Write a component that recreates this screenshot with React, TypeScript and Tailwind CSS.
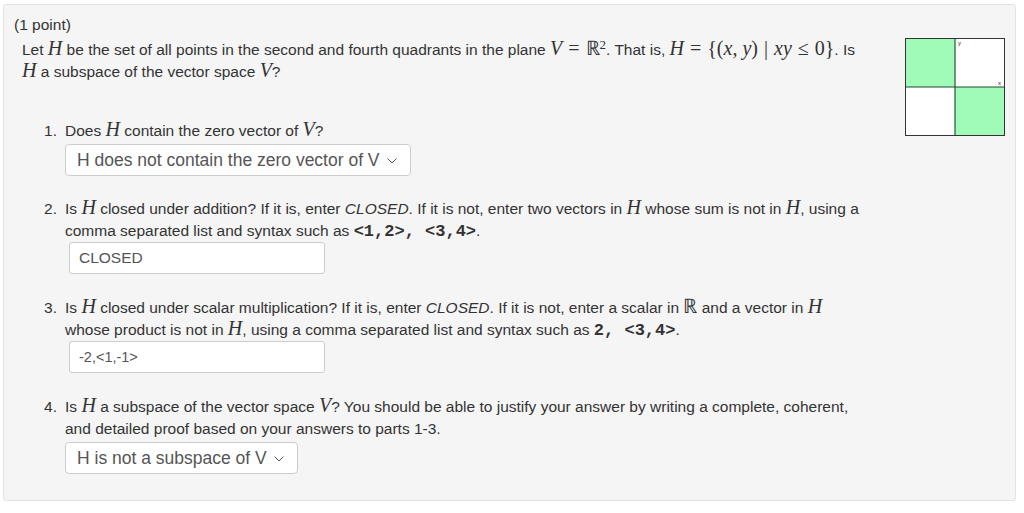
import React from "react";

const M = ({ children }: { children: React.ReactNode }) => (
  <span className="font-['Liberation_Serif',serif] italic text-[20px] leading-[0]">{children}</span>
);

const R = ({ children }: { children: React.ReactNode }) => (
  <span className="font-['Liberation_Serif',serif] text-[20px] leading-[0]">{children}</span>
);

const Rel = ({ children }: { children: React.ReactNode }) => (
  <span className="font-['Liberation_Serif',serif] text-[20px] leading-[0] mx-[6px]">{children}</span>
);

const Code = ({ children }: { children: React.ReactNode }) => (
  <span className="font-['Liberation_Mono',monospace] font-bold text-[17px] leading-[0]">{children}</span>
);

const Chevron = () => (
  <svg width="10" height="6" viewBox="0 0 10 6" className="ml-[7px] mt-[2px]">
    <path d="M0.5 0.5 L5 5 L9.5 0.5" fill="none" stroke="#555" strokeWidth="1" />
  </svg>
);

const Select = ({ text, width }: { text: string; width: string }) => (
  <div
    className={`${width} mt-[2px] h-[32px] flex items-center pl-[11px] bg-white border border-[#ccc] rounded-[4px] text-[17.5px] text-[#555]`}
  >
    <span>{text}</span>
    <Chevron />
  </div>
);

const TextInput = ({ value, small }: { value: string; small?: boolean }) => (
  <div
    className={`ml-[4px] w-[256px] h-[32px] flex items-center pl-[9px] bg-white border border-[#ccc] rounded-[3px] text-[#555] ${
      small ? "text-[14.5px]" : "text-[15.5px]"
    }`}
  >
    {value}
  </div>
);

const Item = ({ n, className, children }: { n: number; className?: string; children: React.ReactNode }) => (
  <li className={`flex ${className ?? ""}`}>
    <span className="w-[21px] shrink-0">{n}.</span>
    <div className="flex flex-col">{children}</div>
  </li>
);

const Graph = () => (
  <svg width="100" height="98" viewBox="0 0 100 98" className="mt-[24px]">
    <rect x="0.5" y="0.5" width="99" height="97" fill="#fff" stroke="#333" />
    <rect x="1" y="1" width="49" height="48" fill="#a0fbb8" />
    <rect x="50" y="49" width="49" height="48" fill="#a0fbb8" />
    <line x1="50" y1="1" x2="50" y2="97" stroke="#1e5a2e" strokeWidth="1.2" />
    <line x1="1" y1="49" x2="99" y2="49" stroke="#1e4a2a" strokeWidth="1.2" />
    <text x="53" y="7" fontSize="6" fontFamily="Liberation Sans, sans-serif" fill="#222">y</text>
    <text x="93" y="47" fontSize="6" fontFamily="Liberation Sans, sans-serif" fill="#222">x</text>
  </svg>
);

export default function App() {
  return (
    <div className="w-[1024px] h-[513px] bg-white pt-[4px] pl-[3px] font-['Liberation_Sans',Arial,sans-serif] text-[15.5px] leading-[22px] text-[#333]">
      <div className="w-[1013px] h-[497px] bg-[#f5f5f5] border border-[#e3e3e3] rounded-[3px] flex pt-[9px] pl-[10px] pr-[10px]">
        <div className="flex-1 flex flex-col">
          <div>(1 point)</div>
          <div className="mt-[3px] ml-[8px] whitespace-nowrap">
            Let <M>H</M> be the set of all points in the second and fourth quadrants in the plane <M>V</M>
            <Rel>=</Rel>
            <R>ℝ</R>
            <sup className="font-['Liberation_Serif',serif] text-[13px]">2</sup>. That is, <M>H</M>
            <Rel>=</Rel>
            <R>{"{("}</R>
            <M>x</M>
            <R>,&nbsp;</R>
            <M>y</M>
            <R>{")"}</R>
            <Rel>|</Rel>
            <M>x</M>
            <M>y</M>
            <Rel>≤</Rel>
            <R>0{"}"}</R>. Is
            <br />
            <M>H</M> a subspace of the vector space <M>V</M>?
          </div>

          <ol className="mt-[37px] ml-[30px] whitespace-nowrap">
            <Item n={1}>
              <div>
                Does <M>H</M> contain the zero vector of <M>V</M>?
              </div>
              <Select text="H does not contain the zero vector of V" width="w-[346px]" />
            </Item>

            <Item n={2} className="mt-[22px]">
              <div>
                Is <M>H</M> closed under addition? If it is, enter <i>CLOSED</i>. If it is not, enter two vectors in{" "}
                <M>H</M> whose sum is not in <M>H</M>, using a
                <br />
                comma separated list and syntax such as <Code>&lt;1,2&gt;, &lt;3,4&gt;</Code>.
              </div>
              <TextInput value="CLOSED" />
            </Item>

            <Item n={3} className="mt-[23px]">
              <div>
                Is <M>H</M> closed under scalar multiplication? If it is, enter <i>CLOSED</i>. If it is not, enter a
                scalar in <R>ℝ</R> and a vector in <M>H</M>
                <br />
                whose product is not in <M>H</M>, using a comma separated list and syntax such as{" "}
                <Code>2, &lt;3,4&gt;</Code>.
              </div>
              <TextInput value="-2,<1,-1>" small />
            </Item>

            <Item n={4} className="mt-[23px]">
              <div>
                Is <M>H</M> a subspace of the vector space <M>V</M>? You should be able to justify your answer by
                writing a complete, coherent,
                <br />
                and detailed proof based on your answers to parts 1-3.
              </div>
              <Select text="H is not a subspace of V" width="w-[233px]" />
            </Item>
          </ol>
        </div>
        <Graph />
      </div>
    </div>
  );
}
